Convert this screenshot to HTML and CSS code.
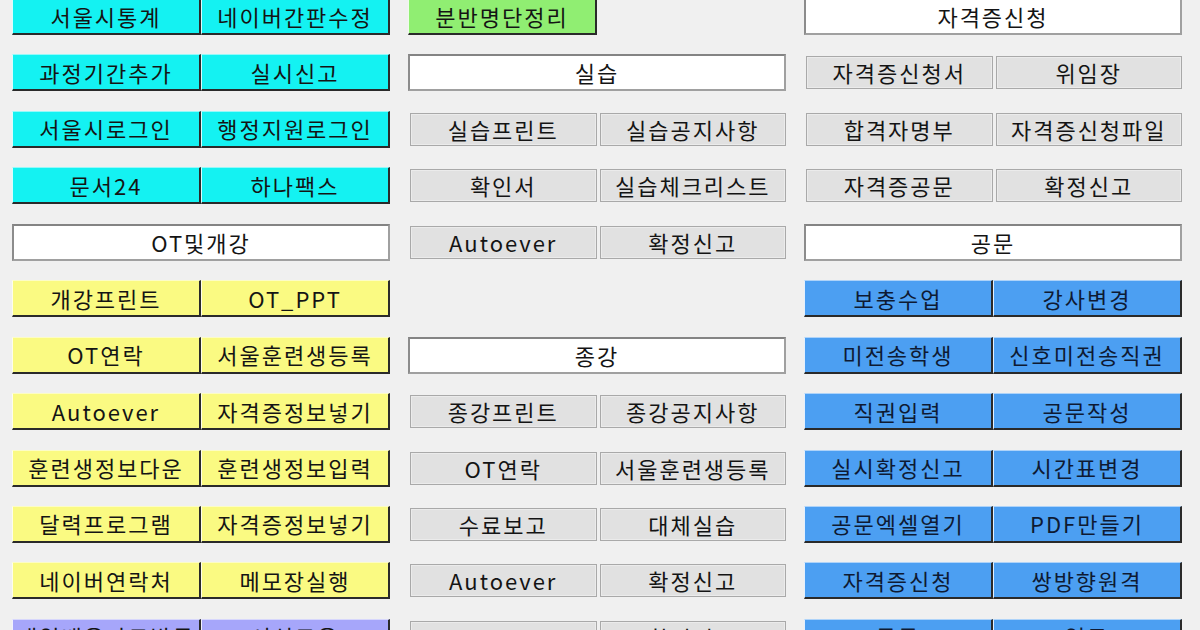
FILE: index.html
```html
<!DOCTYPE html>
<html lang="ko">
<head>
<meta charset="utf-8">
<title>업무 도구</title>
<link rel="stylesheet" href="styles.css">
</head>
<body>
<div class="board">
  <div class="col">
    <div class="row"><div class="btn cyan">서울시통계</div><div class="btn cyan">네이버간판수정</div></div>
    <div class="row"><div class="btn cyan">과정기간추가</div><div class="btn cyan">실시신고</div></div>
    <div class="row"><div class="btn cyan">서울시로그인</div><div class="btn cyan">행정지원로그인</div></div>
    <div class="row"><div class="btn cyan">문서24</div><div class="btn cyan">하나팩스</div></div>
    <div class="head">OT및개강</div>
    <div class="row"><div class="btn yellow">개강프린트</div><div class="btn yellow">OT_PPT</div></div>
    <div class="row"><div class="btn yellow">OT연락</div><div class="btn yellow">서울훈련생등록</div></div>
    <div class="row"><div class="btn yellow">Autoever</div><div class="btn yellow">자격증정보넣기</div></div>
    <div class="row"><div class="btn yellow">훈련생정보다운</div><div class="btn yellow">훈련생정보입력</div></div>
    <div class="row"><div class="btn yellow">달력프로그램</div><div class="btn yellow">자격증정보넣기</div></div>
    <div class="row"><div class="btn yellow">네이버연락처</div><div class="btn yellow">메모장실행</div></div>
    <div class="row"><div class="btn lavender">내일배움카드발급</div><div class="btn lavender">서식모음</div></div>
  </div>
  <div class="col">
    <div class="row"><div class="btn green">분반명단정리</div></div>
    <div class="head">실습</div>
    <div class="row gray-row"><div class="btn gray">실습프린트</div><div class="btn gray">실습공지사항</div></div>
    <div class="row gray-row"><div class="btn gray">확인서</div><div class="btn gray">실습체크리스트</div></div>
    <div class="row gray-row"><div class="btn gray">Autoever</div><div class="btn gray">확정신고</div></div>
    <div class="row empty"></div>
    <div class="head">종강</div>
    <div class="row gray-row"><div class="btn gray">종강프린트</div><div class="btn gray">종강공지사항</div></div>
    <div class="row gray-row"><div class="btn gray">OT연락</div><div class="btn gray">서울훈련생등록</div></div>
    <div class="row gray-row"><div class="btn gray">수료보고</div><div class="btn gray">대체실습</div></div>
    <div class="row gray-row"><div class="btn gray">Autoever</div><div class="btn gray">확정신고</div></div>
    <div class="row gray-row"><div class="btn gray">Autoever</div><div class="btn gray">확정신고</div></div>
  </div>
  <div class="col">
    <div class="head">자격증신청</div>
    <div class="row gray-row"><div class="btn gray">자격증신청서</div><div class="btn gray">위임장</div></div>
    <div class="row gray-row"><div class="btn gray">합격자명부</div><div class="btn gray">자격증신청파일</div></div>
    <div class="row gray-row"><div class="btn gray">자격증공문</div><div class="btn gray">확정신고</div></div>
    <div class="head">공문</div>
    <div class="row"><div class="btn blue">보충수업</div><div class="btn blue">강사변경</div></div>
    <div class="row"><div class="btn blue">미전송학생</div><div class="btn blue">신호미전송직권</div></div>
    <div class="row"><div class="btn blue">직권입력</div><div class="btn blue">공문작성</div></div>
    <div class="row"><div class="btn blue">실시확정신고</div><div class="btn blue">시간표변경</div></div>
    <div class="row"><div class="btn blue">공문엑셀열기</div><div class="btn blue">PDF만들기</div></div>
    <div class="row"><div class="btn blue">자격증신청</div><div class="btn blue">쌍방향원격</div></div>
    <div class="row"><div class="btn blue">목록</div><div class="btn blue">업무</div></div>
  </div>
</div>
</body>
</html>
```
FILE: styles.css
```css
html, body {
  margin: 0;
  padding: 0;
  background: #f0f0f0;
  width: 1200px;
  height: 630px;
  overflow: hidden;
}

.board {
  display: grid;
  grid-template-columns: 378px 378px 378px;
  column-gap: 18px;
  padding-left: 12px;
  margin-top: -2px;
  font-family: "Noto Sans CJK KR", "Noto Sans", sans-serif;
  font-size: 22px;
  letter-spacing: 2px;
  color: #141414;
}

.col {
  display: flex;
  flex-direction: column;
  gap: 19.45px;
}

.row {
  display: grid;
  grid-template-columns: 189px 189px;
  height: 37px;
}

.gray-row {
  grid-template-columns: 186.5px 186.5px;
  column-gap: 3px;
  padding: 2px 0 2px 2px;
  box-sizing: border-box;
}

.btn {
  display: flex;
  align-items: center;
  justify-content: center;
  box-sizing: border-box;
  white-space: nowrap;
  overflow: hidden;
  line-height: 1;
  padding-bottom: 1px;
}

.cyan, .yellow, .blue, .green, .lavender {
  border-top: 1px solid rgba(255, 255, 255, 0.55);
  border-left: 1px solid rgba(255, 255, 255, 0.85);
  border-right: 2px solid #2a2a2a;
  border-bottom: 2px solid #2a2a2a;
}

.cyan { background: #14f2f2; }
.yellow { background: #fafa82; }
.blue { background: #4c9ff2; color: #0e1a33; }
.green { background: #90ee72; }
.lavender { background: #a6a6fa; }

.gray {
  background: #e1e1e1;
  border: 1px solid #a9a9a9;
  box-shadow: inset 0 0 0 1px #ebebeb;
}

.head {
  height: 37px;
  box-sizing: border-box;
  background: #ffffff;
  border: 2px solid #a0a0a0;
  border-top-color: #848484;
  border-left-color: #8c8c8c;
  display: flex;
  align-items: center;
  justify-content: center;
  line-height: 1;
  padding-bottom: 1px;
}
```
